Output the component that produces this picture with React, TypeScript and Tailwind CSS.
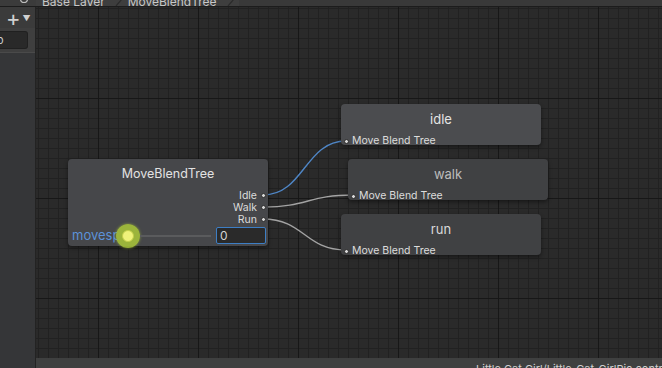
const gridBg =
  "bg-[#2a2a2a] [background-image:linear-gradient(to_right,#171717_1px,transparent_1px),linear-gradient(to_bottom,#171717_1px,transparent_1px),linear-gradient(to_right,#212121_1px,transparent_1px),linear-gradient(to_bottom,#212121_1px,transparent_1px)] [background-size:100px_100px,100px_100px,10px_10px,10px_10px] [background-position:62px_91px,62px_91px,2px_1px,2px_1px]";

type StateNodeProps = {
  name: string;
  left: string;
  top: string;
  bg: string;
  titleColor: string;
};

const Port = () => (
  <span className="w-[3px] h-[3px] rounded-full bg-[#d8d8d8] border border-[#2c2c2c] box-content shrink-0" />
);

const StateNode = ({ name, left, top, bg, titleColor }: StateNodeProps) => (
  <div className={`absolute ${left} ${top} w-[200px] h-[41px] rounded-[4px] ${bg} shadow-[0_2px_4px_rgba(0,0,0,0.45)] flex flex-col`}>
    <div className={`mt-[7px] h-[16px] text-[13px] leading-[16px] text-center ${titleColor}`}>{name}</div>
    <div className="mt-[9px] h-[10px] flex items-center gap-[3px] pl-[3px] text-[10.5px] leading-[10px] text-[#dcdcdc]">
      <Port />
      <span>Move Blend Tree</span>
    </div>
  </div>
);

const OutputRow = ({ label }: { label: string }) => (
  <div className="h-[12px] flex items-center justify-end gap-[4px] pr-[2px] text-[10.5px] leading-[11px] text-[#dcdcdc]">
    <span>{label}</span>
    <Port />
  </div>
);

const Connections = () => (
  <svg className="absolute inset-0 pointer-events-none" width="626" height="352">
    <path d="M227 188 C268 188 269 134 310 134" stroke="#4f86c6" strokeWidth="1.4" fill="none" />
    <path d="M227 200 C272 200 272 188 317 188" stroke="#a3a3a3" strokeWidth="1.4" fill="none" />
    <path d="M227 212 C268 212 269 243 310 243" stroke="#a3a3a3" strokeWidth="1.4" fill="none" />
  </svg>
);

const BlendNode = () => (
  <div className="absolute left-[32px] top-[152px] w-[200px] h-[87px] rounded-[4px] bg-[#46474a] shadow-[0_2px_4px_rgba(0,0,0,0.45)] flex flex-col">
    <div className="mt-[7px] h-[16px] text-[12.5px] leading-[16px] text-center text-[#e2e2e2]">MoveBlendTree</div>
    <div className="mt-[7px] flex flex-col">
      <OutputRow label="Idle" />
      <OutputRow label="Walk" />
      <OutputRow label="Run" />
    </div>
    <div className="mt-[2px] h-[17px] flex items-center pl-[4px] pr-[2px]">
      <div className="w-[45px] overflow-hidden whitespace-nowrap text-[13px] text-[#5c92d8]">movespeed</div>
      <div className="flex-1 flex items-center">
        <div className="w-[24px] h-[24px] -ml-[1px] rounded-full bg-[#a4c03a]/90 flex items-center justify-center shrink-0 shadow-[0_0_3px_rgba(168,196,60,0.7)]">
          <div className="w-[12px] h-[12px] rounded-full bg-[#eef27a] border border-[#c3d04a]" />
        </div>
        <div className="flex-1 h-[2px] bg-[#5a5b5d] mr-[5px]" />
      </div>
      <div className="w-[50px] h-[17px] rounded-[2px] border border-[#3d7ec4] bg-[#2a2a2a] pl-[3px] text-[12px] leading-[15px] text-[#d4d4d4]">0</div>
    </div>
  </div>
);

export default function App() {
  return (
    <div className="w-[662px] h-[368px] overflow-hidden flex flex-col bg-[#353638] font-['Inter','Noto_Sans',sans-serif]">
      {/* top bar, mostly cut off */}
      <div className="h-[7px] shrink-0 flex bg-[#393939] border-b border-[#1c1c1c] overflow-hidden">
        <div className="w-[36px] shrink-0 bg-[#3b3b3b] relative">
          <svg className="absolute left-[19px] top-[-6px]" width="10" height="10">
            <circle cx="5" cy="5" r="3.5" stroke="#bdbdbd" strokeWidth="1.2" fill="none" />
          </svg>
        </div>
        <div className="flex items-end bg-[#3e3e3e] text-[12px] leading-[12px] text-[#c8c8c8] pr-[4px]">
          <span className="pl-[6px] pr-[10px] -mb-[2px]">Base Layer</span>
          <svg width="8" height="7">
            <line x1="1" y1="7" x2="7" y2="0" stroke="#2a2a2a" strokeWidth="1.2" />
          </svg>
          <span className="pl-[5px] pr-[10px] -mb-[2px]">MoveBlendTree</span>
          <svg width="8" height="7">
            <line x1="1" y1="7" x2="7" y2="0" stroke="#2a2a2a" strokeWidth="1.2" />
          </svg>
        </div>
      </div>

      <div className="flex-1 flex min-h-0">
        {/* left panel */}
        <div className="w-[36px] shrink-0 flex flex-col bg-[#353638] border-r border-[#232323]">
          <div className="h-[21px] flex items-center gap-[2px] pl-[6px] bg-[#3b3b3b] text-[#d0d0d0]">
            <span className="text-[22px] leading-[20px]">+</span>
            <span className="text-[8px] leading-[8px]">▼</span>
          </div>
          <div className="h-[25px] flex items-center bg-[#3f3f3f] border-b border-[#4a4a4a]">
            <div className="w-[28px] h-[18px] rounded-r-[3px] bg-[#292929] border border-[#202020] border-l-0 overflow-hidden text-[11px] leading-[16px] text-[#cfcfcf]">
              <span className="-ml-[3px] block">o</span>
            </div>
          </div>
        </div>

        {/* graph canvas + status */}
        <div className="flex-1 flex flex-col min-w-0">
          <div className={`flex-1 relative overflow-hidden ${gridBg}`}>
            <Connections />
            <BlendNode />
            <StateNode name="idle" left="left-[305px]" top="top-[97px]" bg="bg-[#4b4c4f]" titleColor="text-[#e4e4e4]" />
            <StateNode name="walk" left="left-[312px]" top="top-[152px]" bg="bg-[#404143]" titleColor="text-[#bcbcbc]" />
            <StateNode name="run" left="left-[305px]" top="top-[207px]" bg="bg-[#404143]" titleColor="text-[#dadada]" />
          </div>
          <div className="h-[10px] shrink-0 bg-[#3f4040] overflow-hidden whitespace-nowrap pl-[440px] pt-[5px] text-[11px] leading-[12px] text-[#cfcfcf]">
            Little Cat Girl/Little_Cat_GirlPic.controller
          </div>
        </div>
      </div>
    </div>
  );
}
